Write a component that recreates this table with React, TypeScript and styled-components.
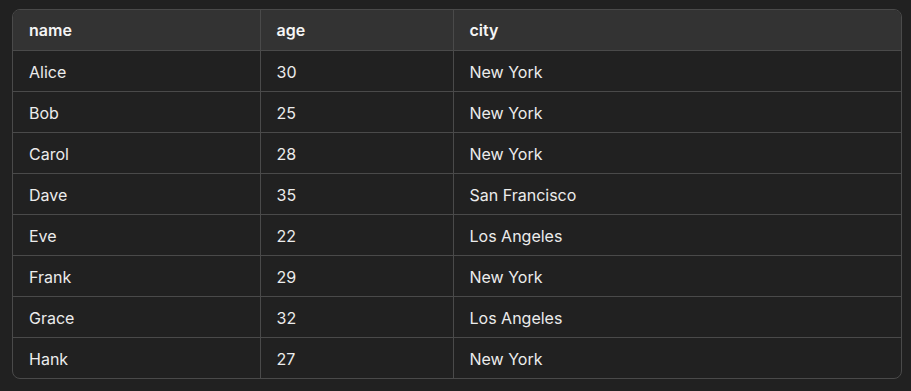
import React from 'react'
import styled, { createGlobalStyle } from 'styled-components'

const GlobalStyle = createGlobalStyle`
  html, body {
    margin: 0;
    background: #212121;
  }
  body {
    font-family: Inter, "Noto Sans", sans-serif;
    color: #ececec;
  }
`

const Page = styled.div`
  padding: 9px 10px 0 12px;
`

// Table
const Frame = styled.div`
  width: 890px;
  border: 1px solid #4a4a4a;
  border-radius: 8px;
  overflow: hidden;
  box-sizing: border-box;
`

const Table = styled.table`
  width: 100%;
  border-collapse: collapse;
  table-layout: fixed;
  font-size: 16px;
`

const HeadCell = styled.th<{ $width?: number }>`
  box-sizing: border-box;
  width: ${(p) => (p.$width ? `${p.$width}px` : 'auto')};
  height: 40px;
  padding: 1px 16px 0;
  text-align: left;
  font-weight: 600;
  color: #f5f5f5;
  background: #333333;
  border-bottom: 1px solid #4a4a4a;
  & + & {
    border-left: 1px solid #4a4a4a;
  }
`

const Row = styled.tr`
  &:not(:last-child) td {
    border-bottom: 1px solid #4a4a4a;
  }
`

const Cell = styled.td`
  height: 38px;
  padding: 2px 16px 0;
  font-weight: 400;
  color: #ececec;
  & + & {
    border-left: 1px solid #4a4a4a;
  }
`

const people = [
  { name: 'Alice', age: 30, city: 'New York' },
  { name: 'Bob', age: 25, city: 'New York' },
  { name: 'Carol', age: 28, city: 'New York' },
  { name: 'Dave', age: 35, city: 'San Francisco' },
  { name: 'Eve', age: 22, city: 'Los Angeles' },
  { name: 'Frank', age: 29, city: 'New York' },
  { name: 'Grace', age: 32, city: 'Los Angeles' },
  { name: 'Hank', age: 27, city: 'New York' },
]

export default function App() {
  return (
    <>
      <GlobalStyle />
      <Page>
        <Frame>
          <Table>
            <thead>
              <tr>
                <HeadCell $width={247}>name</HeadCell>
                <HeadCell $width={193}>age</HeadCell>
                <HeadCell>city</HeadCell>
              </tr>
            </thead>
            <tbody>
              {people.map((p) => (
                <Row key={p.name}>
                  <Cell>{p.name}</Cell>
                  <Cell>{p.age}</Cell>
                  <Cell>{p.city}</Cell>
                </Row>
              ))}
            </tbody>
          </Table>
        </Frame>
      </Page>
    </>
  )
}
